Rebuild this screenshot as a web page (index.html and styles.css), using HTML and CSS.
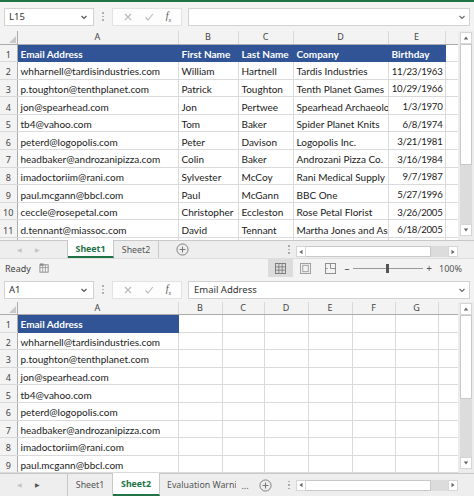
FILE: index.html
```html
<!DOCTYPE html>
<html>
<head>
<meta charset="utf-8">
<link rel="stylesheet" href="styles.css">
</head>
<body>
<div class="app">
  <div class="topline"></div>

  <section class="win win1">
    <div class="fbar">
      <div class="namebox"><span>L15</span><svg class="dd" viewBox="0 0 8 8" width="8" height="8"><path d="M1.5 3 L4 5.5 L6.5 3" fill="none" stroke="#555" stroke-width="1.2"/></svg></div>
      <div class="grip"><i></i><i></i><i></i></div>
      <div class="fbtns">
        <svg viewBox="0 0 10 10" width="10" height="10"><path d="M2 2 L8 8 M8 2 L2 8" stroke="#b8b8b8" stroke-width="1.1"/></svg>
        <svg viewBox="0 0 10 10" width="10" height="10"><path d="M1.5 5.5 L4 8 L8.8 2" fill="none" stroke="#b8b8b8" stroke-width="1.1"/></svg>
        <span class="fx">f<sub>x</sub></span>
      </div>
      <div class="finput"><span></span><svg class="dd" viewBox="0 0 8 8" width="8" height="8"><path d="M1.5 3 L4 5.5 L6.5 3" fill="none" stroke="#666" stroke-width="1.1"/></svg></div>
    </div>
    <div class="gridarea">
      <div class="sheet">
        <table class="grid g1">
          <colgroup><col class="c-rh"><col class="c-a"><col class="c1-b"><col class="c1-c"><col class="c1-d"><col class="c1-e"><col class="c1-f"></colgroup>
          <tr class="hdr"><th class="corner"><svg viewBox="0 0 8 8" width="7" height="7"><path d="M8 0 L8 8 L0 8 Z" fill="#c9c9c9"/></svg></th><th>A</th><th>B</th><th>C</th><th>D</th><th>E</th><th></th></tr>
          <tr class="r"><th>1</th><td class="blue">Email Address</td><td class="blue">First Name</td><td class="blue">Last Name</td><td class="blue">Company</td><td class="blue">Birthday</td><td></td></tr>
          <tr class="r"><th>2</th><td>whharnell@tardisindustries.com</td><td>William</td><td>Hartnell</td><td>Tardis Industries</td><td class="num">11/23/1963</td><td></td></tr>
          <tr class="r"><th>3</th><td>p.toughton@tenthplanet.com</td><td>Patrick</td><td>Toughton</td><td>Tenth Planet Games</td><td class="num">10/29/1966</td><td></td></tr>
          <tr class="r"><th>4</th><td>jon@spearhead.com</td><td>Jon</td><td>Pertwee</td><td>Spearhead Archaeology</td><td class="num">1/3/1970</td><td></td></tr>
          <tr class="r"><th>5</th><td>tb4@vahoo.com</td><td>Tom</td><td>Baker</td><td>Spider Planet Knits</td><td class="num">6/8/1974</td><td></td></tr>
          <tr class="r"><th>6</th><td>peterd@logopolis.com</td><td>Peter</td><td>Davison</td><td>Logopolis Inc.</td><td class="num">3/21/1981</td><td></td></tr>
          <tr class="r"><th>7</th><td>headbaker@androzanipizza.com</td><td>Colin</td><td>Baker</td><td>Androzani Pizza Co.</td><td class="num">3/16/1984</td><td></td></tr>
          <tr class="r"><th>8</th><td>imadoctoriim@rani.com</td><td>Sylvester</td><td>McCoy</td><td>Rani Medical Supply</td><td class="num">9/7/1987</td><td></td></tr>
          <tr class="r"><th>9</th><td>paul.mcgann@bbcl.com</td><td>Paul</td><td>McGann</td><td>BBC One</td><td class="num">5/27/1996</td><td></td></tr>
          <tr class="r"><th>10</th><td>ceccle@rosepetal.com</td><td>Christopher</td><td>Eccleston</td><td>Rose Petal Florist</td><td class="num">3/26/2005</td><td></td></tr>
          <tr class="r"><th>11</th><td>d.tennant@miassoc.com</td><td>David</td><td>Tennant</td><td>Martha Jones and Associates</td><td class="num">6/18/2005</td><td></td></tr>
          <tr class="r"><th></th><td></td><td></td><td></td><td></td><td></td><td></td></tr>
        </table>
      </div>
      <div class="vscroll">
        <div class="vbar">
          <div class="varrow"><svg viewBox="0 0 8 8" width="6" height="6"><path d="M1 6 L4 2 L7 6 Z" fill="#666"/></svg></div>
          <div class="vthumb t1"></div>
          <div class="vtrack"></div>
          <div class="varrow"><svg viewBox="0 0 8 8" width="6" height="6"><path d="M1 2 L4 6 L7 2 Z" fill="#666"/></svg></div>
        </div>
      </div>
    </div>
    <div class="tabbar tb1">
      <div class="nav"><span class="navl dim">&#9664;</span><span class="navr dim">&#9654;</span></div>
      <div class="tab active">Sheet1</div>
      <div class="tab">Sheet2</div>
      <div class="plus"><svg viewBox="0 0 14 14" width="13" height="13"><circle cx="7" cy="7" r="6" fill="none" stroke="#777" stroke-width="1"/><path d="M7 3.8 V10.2 M3.8 7 H10.2" stroke="#777" stroke-width="1.1"/></svg></div>
      <div class="spacer"></div>
      <div class="vdots"><i></i><i></i><i></i></div>
      <div class="hscroll">
        <div class="harrow"><svg viewBox="0 0 8 8" width="6" height="6"><path d="M6 1 L2 4 L6 7 Z" fill="#666"/></svg></div>
        <div class="hthumb"></div>
        <div class="htrack"></div>
        <div class="harrow"><svg viewBox="0 0 8 8" width="6" height="6"><path d="M2 1 L6 4 L2 7 Z" fill="#666"/></svg></div>
      </div>
    </div>
    <div class="status">
      <span class="ready">Ready</span>
      <svg class="macro" viewBox="0 0 12 12" width="11" height="11"><rect x="1" y="2" width="9" height="8" fill="none" stroke="#8a8a8a"/><path d="M1 5 H10 M4 2 V10 M7 2 V10" stroke="#8a8a8a" stroke-width="0.8"/><rect x="1" y="0.5" width="4" height="2.5" fill="#8a8a8a"/></svg>
      <div class="spacer"></div>
      <div class="view sel"><svg viewBox="0 0 12 12" width="11" height="11"><rect x="0.5" y="0.5" width="11" height="11" fill="none" stroke="#777"/><path d="M0.5 4.2 H11.5 M0.5 7.8 H11.5 M4.2 0.5 V11.5 M7.8 0.5 V11.5" stroke="#777" stroke-width="0.9"/></svg></div>
      <div class="view"><svg viewBox="0 0 12 12" width="11" height="11"><rect x="0.5" y="0.5" width="11" height="11" fill="none" stroke="#999"/><rect x="3" y="2.5" width="6" height="7" fill="none" stroke="#999"/></svg></div>
      <div class="view"><svg viewBox="0 0 12 12" width="11" height="11"><rect x="0.5" y="0.5" width="11" height="11" fill="none" stroke="#888"/><path d="M6 0.5 V6 H11.5 M0.5 6 H3" stroke="#888" fill="none"/></svg></div>
      <div class="zoomctl">
        <span class="zsign">&#8211;</span>
        <div class="zline"><i></i></div>
        <span class="zsign">+</span>
        <span class="zpct">100%</span>
      </div>
    </div>
  </section>

  <section class="win win2">
    <div class="fbar fbar2">
      <div class="namebox"><span>A1</span><svg class="dd" viewBox="0 0 8 8" width="8" height="8"><path d="M1.5 3 L4 5.5 L6.5 3" fill="none" stroke="#555" stroke-width="1.2"/></svg></div>
      <div class="grip"><i></i><i></i><i></i></div>
      <div class="fbtns">
        <svg viewBox="0 0 10 10" width="10" height="10"><path d="M2 2 L8 8 M8 2 L2 8" stroke="#b8b8b8" stroke-width="1.1"/></svg>
        <svg viewBox="0 0 10 10" width="10" height="10"><path d="M1.5 5.5 L4 8 L8.8 2" fill="none" stroke="#b8b8b8" stroke-width="1.1"/></svg>
        <span class="fx">f<sub>x</sub></span>
      </div>
      <div class="finput"><span>Email Address</span><svg class="dd" viewBox="0 0 8 8" width="8" height="8"><path d="M1.5 3 L4 5.5 L6.5 3" fill="none" stroke="#666" stroke-width="1.1"/></svg></div>
    </div>
    <div class="gridarea ga2">
      <div class="sheet">
        <table class="grid g2">
          <colgroup><col class="c-rh"><col class="c-a"><col class="c2-b"><col class="c2-c"><col class="c2-d"><col class="c2-e"><col class="c2-f"><col class="c2-g"><col class="c2-h"></colgroup>
          <tr class="hdr h2"><th class="corner"><svg viewBox="0 0 8 8" width="7" height="7"><path d="M8 0 L8 8 L0 8 Z" fill="#c9c9c9"/></svg></th><th>A</th><th>B</th><th>C</th><th>D</th><th>E</th><th>F</th><th>G</th><th></th></tr>
          <tr class="r"><th>1</th><td class="blue">Email Address</td><td></td><td></td><td></td><td></td><td></td><td></td><td></td></tr>
          <tr class="r"><th>2</th><td>whharnell@tardisindustries.com</td><td></td><td></td><td></td><td></td><td></td><td></td><td></td></tr>
          <tr class="r"><th>3</th><td>p.toughton@tenthplanet.com</td><td></td><td></td><td></td><td></td><td></td><td></td><td></td></tr>
          <tr class="r"><th>4</th><td>jon@spearhead.com</td><td></td><td></td><td></td><td></td><td></td><td></td><td></td></tr>
          <tr class="r"><th>5</th><td>tb4@vahoo.com</td><td></td><td></td><td></td><td></td><td></td><td></td><td></td></tr>
          <tr class="r"><th>6</th><td>peterd@logopolis.com</td><td></td><td></td><td></td><td></td><td></td><td></td><td></td></tr>
          <tr class="r"><th>7</th><td>headbaker@androzanipizza.com</td><td></td><td></td><td></td><td></td><td></td><td></td><td></td></tr>
          <tr class="r"><th>8</th><td>imadoctoriim@rani.com</td><td></td><td></td><td></td><td></td><td></td><td></td><td></td></tr>
          <tr class="r"><th>9</th><td>paul.mcgann@bbcl.com</td><td></td><td></td><td></td><td></td><td></td><td></td><td></td></tr>
        </table>
      </div>
      <div class="vscroll">
        <div class="vbar">
          <div class="varrow"><svg viewBox="0 0 8 8" width="6" height="6"><path d="M1 6 L4 2 L7 6 Z" fill="#666"/></svg></div>
          <div class="vthumb t2"></div>
          <div class="vtrack"></div>
          <div class="varrow"><svg viewBox="0 0 8 8" width="6" height="6"><path d="M1 2 L4 6 L7 2 Z" fill="#666"/></svg></div>
        </div>
      </div>
    </div>
    <div class="tabbar tb2">
      <div class="nav"><span class="navl dim">&#9664;</span><span class="navr">&#9654;</span></div>
      <div class="tab first">Sheet1</div>
      <div class="tab active">Sheet2</div>
      <div class="tab eval"><span>Evaluation Warning</span></div>
      <div class="more">...</div>
      <div class="plus"><svg viewBox="0 0 14 14" width="13" height="13"><circle cx="7" cy="7" r="6" fill="none" stroke="#777" stroke-width="1"/><path d="M7 3.8 V10.2 M3.8 7 H10.2" stroke="#777" stroke-width="1.1"/></svg></div>
      <div class="spacer"></div>
      <div class="vdots"><i></i><i></i><i></i></div>
      <div class="hscroll">
        <div class="harrow"><svg viewBox="0 0 8 8" width="6" height="6"><path d="M6 1 L2 4 L6 7 Z" fill="#666"/></svg></div>
        <div class="hthumb"></div>
        <div class="htrack"></div>
        <div class="harrow"><svg viewBox="0 0 8 8" width="6" height="6"><path d="M2 1 L6 4 L2 7 Z" fill="#666"/></svg></div>
      </div>
    </div>
  </section>
</div>
</body>
</html>
```

FILE: styles.css
```css
* { box-sizing: border-box; }
html, body { margin: 0; padding: 0; }
body {
  width: 474px;
  height: 496px;
  overflow: hidden;
  background: #f0f0f0;
  font-family: "Lato", "Open Sans", sans-serif;
  color: #222;
}
.app { display: flex; flex-direction: column; width: 474px; height: 496px; }
.topline { height: 2px; background: #217346; flex: none; }

.win { display: flex; flex-direction: column; flex: none; }

/* formula bar */
.fbar {
  height: 29px;
  display: flex;
  align-items: center;
  background: #f3f3f3;
  padding-left: 4px;
  flex: none;
}
.fbar2 { height: 25px; }
.namebox {
  width: 90px;
  height: 18px;
  background: #fff;
  border: 1px solid #d2d2d2;
  display: flex;
  align-items: center;
  justify-content: space-between;
  padding: 0 5px 0 4px;
  font-family: "Noto Sans", sans-serif;
  font-size: 9.5px;
  color: #333;
}
.grip { width: 18px; display: flex; flex-direction: column; align-items: center; gap: 2px; }
.grip i { width: 1.5px; height: 1.5px; background: #b0b0b0; display: block; }
.fbtns {
  width: 70px;
  height: 18px;
  background: #fdfdfd;
  border: 1px solid #e2e2e2;
  display: flex;
  align-items: center;
  justify-content: space-around;
  padding: 0 4px;
}
.fx { font-family: "Liberation Serif", serif; font-style: italic; font-size: 10px; color: #555; }
.fx sub { font-size: 6px; }
.finput {
  margin-left: 6px;
  width: 282px;
  height: 18px;
  background: #fff;
  border: 1px solid #d2d2d2;
  display: flex;
  align-items: center;
  justify-content: space-between;
  padding: 0 3px 0 5px;
  font-family: "Noto Sans", sans-serif;
  font-size: 9.5px;
  color: #333;
}

/* grid */
.gridarea { display: flex; height: 209px; flex: none; background: #fff; }
.ga2 { height: 171px; }
.sheet { width: 458px; overflow: hidden; flex: none; }
.grid {
  table-layout: fixed;
  border-collapse: collapse;
  width: 458px;
}
.c-rh { width: 17px; }
.c-a { width: 161px; }
.c1-b { width: 60px; }
.c1-c { width: 55px; }
.c1-d { width: 95px; }
.c1-e { width: 57px; }
.c1-f { width: 13px; }
.c2-b { width: 44px; }
.c2-c { width: 42px; }
.c2-d { width: 44px; }
.c2-e { width: 44px; }
.c2-f { width: 43px; }
.c2-g { width: 43px; }
.c2-h { width: 20px; }

.grid th, .grid td {
  padding: 0;
  overflow: hidden;
  white-space: nowrap;
  text-overflow: clip;
}
.hdr th {
  height: 13px;
  background: #f3f3f3;
  border-right: 1px solid #d9d9d9;
  border-bottom: 1px solid #ababab;
  font-family: "Noto Sans", sans-serif;
  font-weight: normal;
  font-size: 9px;
  line-height: 12px;
  color: #444;
  text-align: center;
}
.h2 th { height: 12px; }
.hdr th.corner { text-align: right; vertical-align: bottom; line-height: 0; padding: 0 1px 1px 0; border-right: 1px solid #ababab; }
.r { height: 17.6px; }
.r th {
  background: #f3f3f3;
  border-right: 1px solid #ababab;
  border-bottom: 1px solid #d9d9d9;
  font-family: "Noto Sans", sans-serif;
  font-weight: normal;
  font-size: 9px;
  color: #444;
  text-align: center;
  padding-top: 3px;
}
.r td {
  border-right: 1px solid #dadada;
  border-bottom: 1px solid #dadada;
  font-size: 10px;
  padding: 2px 2px 0 3px;
  color: #1a1a1a;
}
.r td.num { text-align: right; padding-right: 2px; padding-left: 0; font-size: 9.6px; letter-spacing: -0.25px; }
.r td.blue {
  background: #305496;
  color: #fff;
  font-weight: bold;
  border-right-color: #305496;
  border-bottom-color: #305496;
}

/* vertical scrollbar */
.vscroll { width: 16px; flex: none; background: #ececec; padding: 1px 2px 4px 2px; display: flex; }
.vbar { width: 12px; display: flex; flex-direction: column; }
.varrow { height: 12px; background: #fff; border: 1px solid #d6d6d6; display: flex; align-items: center; justify-content: center; flex: none; }
.vthumb { background: #fff; border: 1px solid #c8c8c8; flex: none; }
.t1 { height: 121px; }
.t2 { height: 84px; }
.vtrack { flex: 1; background: #dcdcdc; }

/* tab bar */
.tabbar {
  height: 18px;
  display: flex;
  align-items: stretch;
  background: #eeeeee;
  border-top: 1px solid #c8c8c8;
  flex: none;
  font-family: "Noto Sans", sans-serif;
  font-size: 8.8px;
  color: #555;
}
.tb2 { height: 23px; }
.nav { width: 68px; display: flex; align-items: center; padding-left: 17px; gap: 13px; font-size: 5.5px; line-height: 6px; color: #555; border-right: 1px solid #c8c8c8; }
.nav .dim { color: #c4c4c4; }
.tab { width: 45px; display: flex; align-items: center; justify-content: center; border-right: 1px solid #c8c8c8; }
.tab.active {
  width: 46px;
  background: #fff;
  color: #217346;
  font-weight: bold;
  border-bottom: 2px solid #217346;
  margin-top: -1px;
  padding-top: 1px;
}
.tb2 .tab.active { width: 47px; }
.tab.eval { width: 77px; border-right: none; justify-content: flex-start; padding-left: 7px; overflow: hidden; white-space: nowrap; }
.tab.eval span { display: block; width: 69px; overflow: hidden; }
.more { width: 16px; display: flex; align-items: center; justify-content: center; font-size: 9px; color: #555; }
.plus { width: 46px; display: flex; align-items: center; justify-content: center; }
.tb2 .plus { width: 24px; }
.spacer { flex: 1; }
.vdots { width: 12px; display: flex; flex-direction: column; align-items: center; justify-content: center; gap: 2px; }
.vdots i { display: block; width: 1.5px; height: 1.5px; background: #aaa; }
.hscroll { width: 162px; margin: 0 16px 0 0; height: 11px; align-self: center; display: flex; margin-left: 1px; }
.tb1 .hscroll { margin-top: 4px; }
.harrow { width: 10px; background: #fff; border: 1px solid #d6d6d6; display: flex; align-items: center; justify-content: center; flex: none; }
.hthumb { width: 125px; background: #fff; border: 1px solid #c8c8c8; border-left: none; }
.htrack { flex: 1; background: #dcdcdc; }

/* status bar */
.status {
  height: 19px;
  display: flex;
  align-items: stretch;
  background: #f3f3f3;
  border-top: 1px solid #dedede;
  font-family: "Noto Sans", sans-serif;
  font-size: 9px;
  color: #444;
  flex: none;
  padding-right: 12px;
}
.ready { display: flex; align-items: center; padding-left: 5px; width: 39px; }
.macro { align-self: center; }
.view { width: 25px; display: flex; align-items: center; justify-content: center; }
.view.sel { background: #dcdcdc; }
.zoomctl { display: flex; align-items: center; }
.zsign { font-size: 10px; color: #555; width: 8px; text-align: center; }
.zline { width: 70px; height: 1px; background: #999; position: relative; margin: 0 2px; }
.zline i { position: absolute; left: 33px; top: -4px; width: 3px; height: 9px; background: #555; }
.zpct { margin-left: 6px; font-size: 9px; color: #555; }
```
